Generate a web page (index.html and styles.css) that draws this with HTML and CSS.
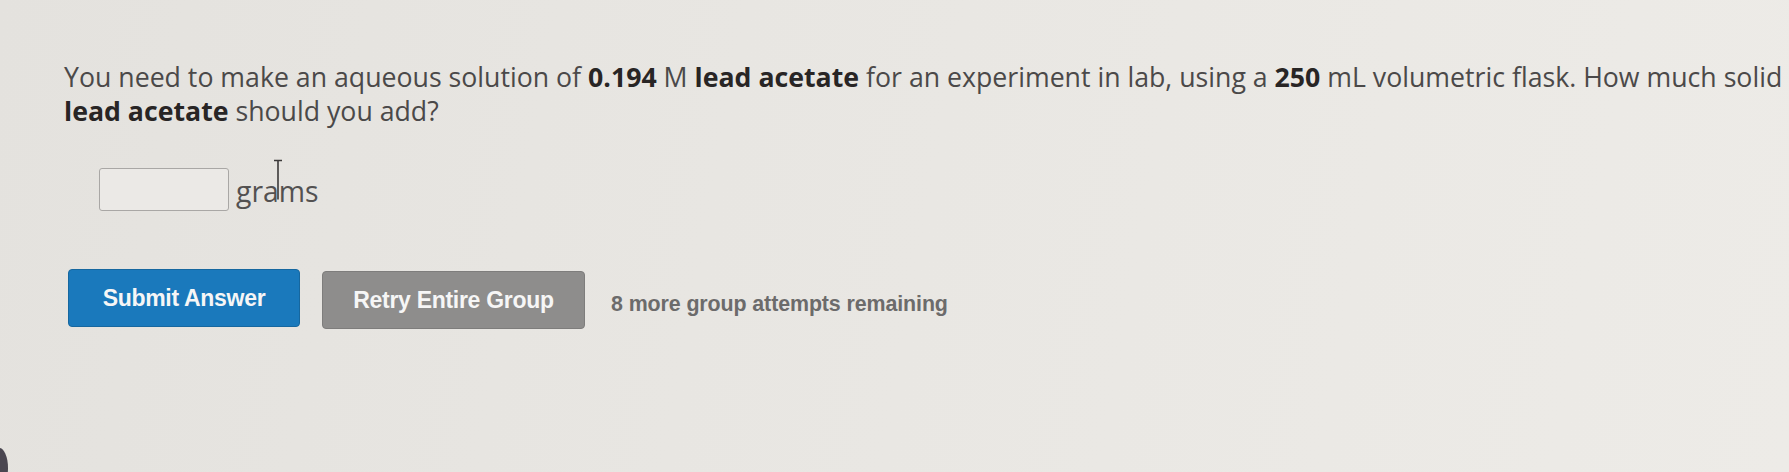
FILE: index.html
```html
<!DOCTYPE html>
<html>
<head>
<meta charset="utf-8">
<link rel="stylesheet" href="styles.css">
</head>
<body>
<div class="page">
  <p class="question">You need to make an aqueous solution of <b>0.194</b> M <b>lead acetate</b> for an experiment in lab, using a <b>250</b> mL volumetric flask. How much solid<br><b>lead acetate</b> should you add?</p>
  <div class="answer-row">
    <span class="answer-box"></span>
    <span class="unit">grams</span>
    <svg class="ibeam" width="12" height="42" viewBox="0 0 12 42">
      <path d="M2 1.5 H10 M6 1.5 V40.5" stroke="#3c3a3a" stroke-width="1.6" fill="none"/>
    </svg>
  </div>
  <div class="actions">
    <button class="btn btn-primary">Submit Answer</button>
    <button class="btn btn-secondary">Retry Entire Group</button>
    <span class="attempts">8 more group attempts remaining</span>
  </div>
</div>
<div class="bezel"></div>
</body>
</html>
```
FILE: styles.css
```css
html, body {
  margin: 0;
  padding: 0;
  width: 1789px;
  height: 472px;
  overflow: hidden;
}
body {
  background: linear-gradient(100deg, #e4e2de 0%, #e8e6e2 40%, #ebe9e5 75%, #edebe7 100%);
  position: relative;
}
.page {
  padding: 60px 0 0 64px;
  font-family: "Open Sans", sans-serif;
}
.question {
  margin: 0;
  font-size: 26.7px;
  line-height: 34px;
  color: #4b4949;
  white-space: nowrap;
}
.question b {
  color: #282525;
  font-weight: 700;
}
.answer-row {
  position: relative;
  display: flex;
  align-items: flex-end;
  margin: 40px 0 0 35px;
}
.answer-box {
  width: 128px;
  height: 41px;
  border: 1px solid #a9a7a5;
  border-radius: 3px;
  background: #ebe9e6;
}
.unit {
  font-size: 28.4px;
  line-height: 34px;
  color: #535151;
  margin: 0 0 3px 7px;
}
.ibeam {
  position: absolute;
  left: 173px;
  top: -9px;
}
.actions {
  display: flex;
  align-items: flex-start;
  margin: 58px 0 0 4px;
}
.btn {
  font-family: "Liberation Sans", Arial, sans-serif;
  font-weight: 700;
  font-size: 23px;
  letter-spacing: -0.3px;
  color: #f6f6f6;
  border-radius: 4px;
  height: 58px;
  padding: 0;
}
.btn-primary {
  background: #1a79bc;
  border: 1px solid #16679f;
  width: 232px;
}
.btn-secondary {
  background: #8e8d8c;
  border: 1px solid #7e7d7c;
  width: 263px;
  margin: 2px 0 0 22px;
}
.attempts {
  align-self: center;
  font-family: "Liberation Sans", Arial, sans-serif;
  font-weight: 700;
  font-size: 21.4px;
  letter-spacing: -0.1px;
  color: #6c6b6b;
  margin: 10px 0 0 26px;
}
.bezel {
  position: absolute;
  left: -10px;
  top: 448px;
  width: 18px;
  height: 40px;
  border-radius: 50%;
  background: #4a4650;
}
```
